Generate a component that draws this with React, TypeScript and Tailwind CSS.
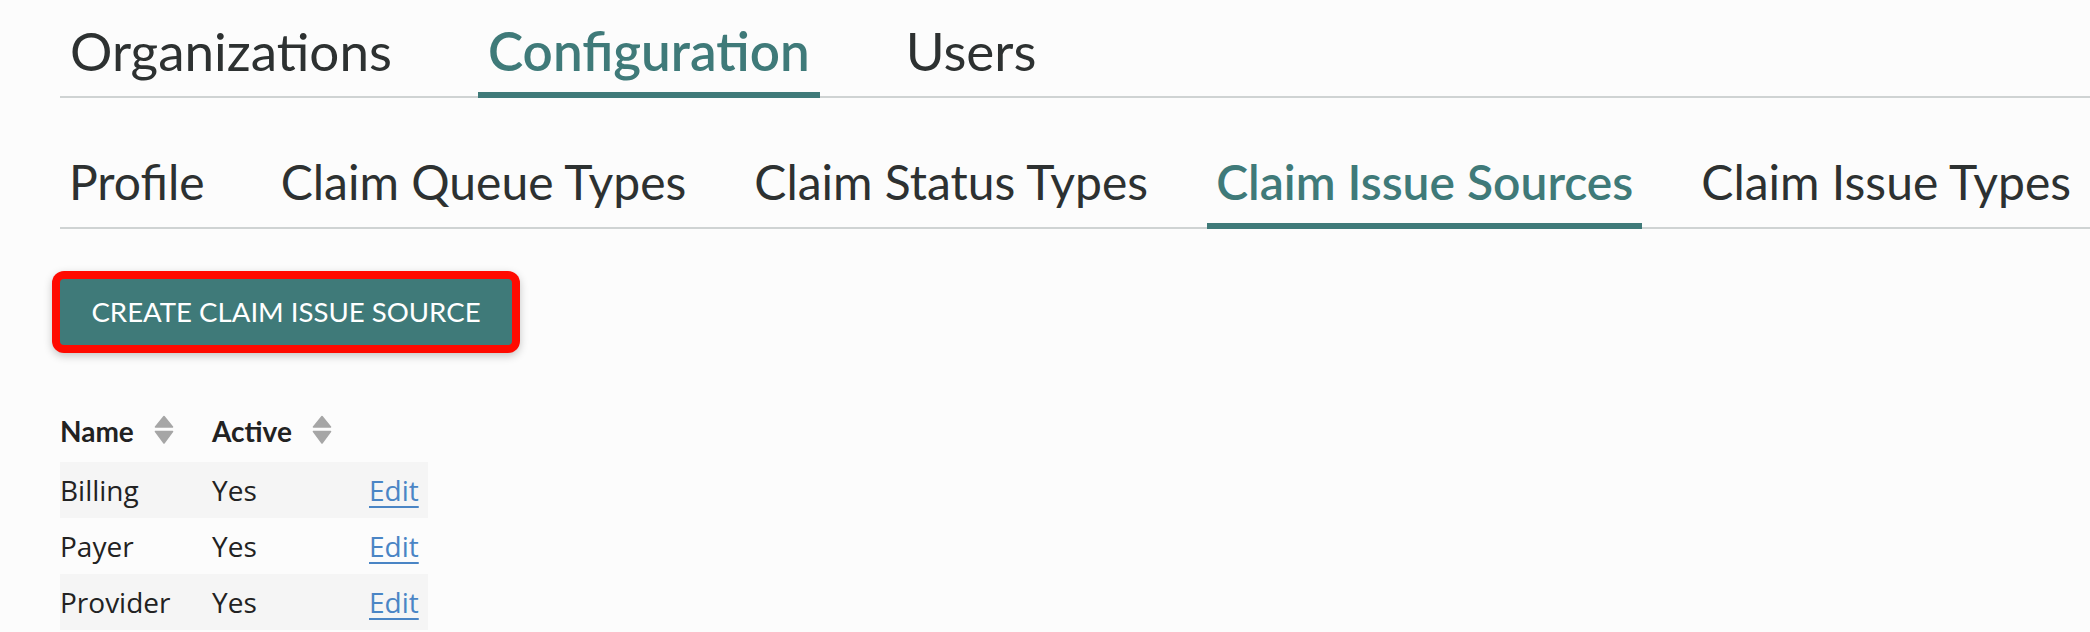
import React from "react";

function SortIcon() {
  return (
    <svg width="20" height="30" viewBox="0 0 20 30" className="block shrink-0">
      <path d="M1.5 12 L10 1.5 L18.5 12 Z" fill="#a6a6a6" stroke="#a6a6a6" strokeWidth="1.6" strokeLinejoin="round" />
      <path d="M1.5 16.5 L18.5 16.5 L10 28 Z" fill="#a6a6a6" stroke="#a6a6a6" strokeWidth="1.6" strokeLinejoin="round" />
    </svg>
  );
}

export default function App() {
  const top = [
    { label: "Organizations", active: false },
    { label: "Configuration", active: true },
    { label: "Users", active: false },
  ];
  const sub = [
    { label: "Profile", active: false, extra: "pr-[17px]" },
    { label: "Claim Queue Types", active: false, extra: "pr-[9px]" },
    { label: "Claim Status Types", active: false, extra: "pr-[9px]" },
    { label: "Claim Issue Sources", active: true, extra: "pr-[9px]" },
    { label: "Claim Issue Types", active: false, extra: "pr-[9px]" },
  ];
  const rows = [
    { name: "Billing", active: "Yes" },
    { name: "Payer", active: "Yes" },
    { name: "Provider", active: "Yes" },
  ];
  return (
    <div className="w-[2090px] h-[632px] overflow-hidden bg-[#fcfcfc] pl-[60px] font-['Lato',sans-serif] text-[#2d3131]">
      <div className="flex gap-[76px] border-b-2 border-[#cfd3d3] pt-[19px] whitespace-nowrap">
        {top.map((t) => (
          <div
            key={t.label}
            className={
              "px-[10px] pb-[9px] -mb-[2px] border-b-[6px] text-[53px] leading-[1.2] " +
              (t.active ? "border-[#3f7a79] text-[#3f7a79] font-semibold" : "border-transparent")
            }
          >
            {t.label}
          </div>
        ))}
      </div>
      <div className="mt-[55px] flex gap-[50px] border-b-2 border-[#cfd3d3] whitespace-nowrap">
        {sub.map((t) => (
          <div
            key={t.label}
            className={
              "pl-[9px] pb-[13px] -mb-[2px] border-b-[6px] text-[48px] leading-[1.2] " +
              t.extra +
              " " +
              (t.active ? "border-[#3f7a79] text-[#3f7a79] font-semibold" : "border-transparent")
            }
          >
            {t.label}
          </div>
        ))}
      </div>
      <div className="mt-[42px] -ml-[8px] w-fit rounded-[12px] bg-[#ff0a00] p-[8px] shadow-[0_3px_8px_rgba(0,0,0,0.22)]">
        <button className="flex h-[66px] w-[452px] items-center justify-center rounded-[4px] bg-[#3f7a79] text-[27.6px] text-white">
          CREATE CLAIM ISSUE SOURCE
        </button>
      </div>
      <div className="mt-[62px] w-[368px]">
        <div className="grid h-[47px] grid-cols-[152px_156px_60px] items-start text-[28px] font-bold leading-[1.2] text-[#222]">
          <div className="flex items-start">
            <span>Name</span>
            <span className="ml-[20px]"><SortIcon /></span>
          </div>
          <div className="flex items-start">
            <span>Active</span>
            <span className="ml-[20px]"><SortIcon /></span>
          </div>
          <div />
        </div>
        {rows.map((r, i) => (
          <div
            key={r.name}
            className={
              "grid h-[56px] grid-cols-[152px_157px_59px] items-center font-['Open_Sans',sans-serif] text-[28px] text-[#222] " +
              (i % 2 === 0 ? "bg-[#f5f5f5]" : "")
            }
          >
            <div>{r.name}</div>
            <div>{r.active}</div>
            <div>
              <a href="#" className="text-[#4a85c5] underline decoration-2 underline-offset-[5px]">Edit</a>
            </div>
          </div>
        ))}
      </div>
    </div>
  );
}
